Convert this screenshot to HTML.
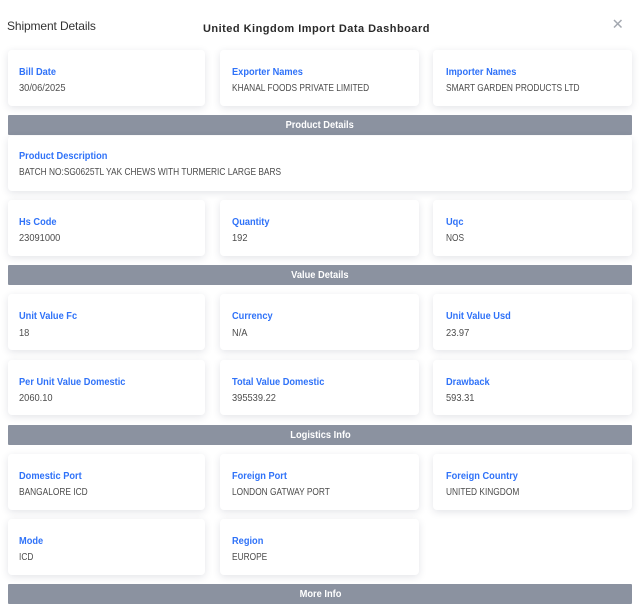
<!DOCTYPE html>
<html><head><meta charset="utf-8"><style>
html,body{margin:0;padding:0;background:#fff}
#p{position:relative;width:640px;height:613px;overflow:hidden;background:#fff;font-family:"Liberation Sans",sans-serif}
.c{position:absolute;background:#fff;border-radius:4px;box-shadow:0 2px 8px rgba(40,50,80,.13)}
.l{position:absolute;left:11px;top:17px;font-size:10px;line-height:12px;font-weight:700;color:#2f72f8;white-space:nowrap;transform:scaleX(.925);transform-origin:0 0}
.v{position:absolute;left:11px;top:32px;font-size:10.5px;line-height:12px;color:#4d4d4d;white-space:nowrap;transform:scaleX(.795);transform-origin:0 0}
.n{transform:scaleX(.885)}
.m{left:12px}.r{left:13px}
.d{top:33px}
.b{position:absolute;left:8px;width:624px;height:20px;background:#8b92a0;color:#fff;font-size:10px;font-weight:700;line-height:20px;text-align:center;border-radius:1px}
.b span{display:inline-block;position:relative;top:1px;transform:scaleX(.93)}
.t{position:absolute;white-space:nowrap}
</style></head><body><div id="p">
<div class="t" style="left:7px;top:19px;font-size:12px;line-height:14px;color:#333;letter-spacing:-.12px">Shipment Details</div>
<div class="t" style="left:203px;top:22px;font-size:11px;line-height:14px;font-weight:700;color:#2a2a2a;letter-spacing:.48px">United Kingdom Import Data Dashboard</div>
<svg style="position:absolute;left:612px;top:18px" width="11" height="11" viewBox="0 0 11 11"><path d="M2 2L9.5 9.5M9.5 2L2 9.5" stroke="#a3a8b0" stroke-width="1.5" fill="none"/></svg>

<div class="c" style="left:8px;top:50px;width:197px;height:56px"><div class="l">Bill Date</div><div class="v n">30/06/2025</div></div>
<div class="c" style="left:220px;top:50px;width:199px;height:56px"><div class="l m">Exporter Names</div><div class="v m">KHANAL FOODS PRIVATE LIMITED</div></div>
<div class="c" style="left:433px;top:50px;width:199px;height:56px"><div class="l r">Importer Names</div><div class="v r">SMART GARDEN PRODUCTS LTD</div></div>

<div class="b" style="top:115px"><span>Product Details</span></div>
<div class="c" style="left:8px;top:136px;width:624px;height:55px"><div class="l" style="top:15px">Product Description</div><div class="v" style="top:30px">BATCH NO:SG0625TL YAK CHEWS WITH TURMERIC LARGE BARS</div></div>

<div class="c" style="left:8px;top:200px;width:197px;height:56px"><div class="l">Hs Code</div><div class="v n">23091000</div></div>
<div class="c" style="left:220px;top:200px;width:199px;height:56px"><div class="l m">Quantity</div><div class="v n m">192</div></div>
<div class="c" style="left:433px;top:200px;width:199px;height:56px"><div class="l r">Uqc</div><div class="v r">NOS</div></div>

<div class="b" style="top:265px"><span>Value Details</span></div>
<div class="c" style="left:8px;top:294px;width:197px;height:56px"><div class="l">Unit Value Fc</div><div class="v n d">18</div></div>
<div class="c" style="left:220px;top:294px;width:199px;height:56px"><div class="l m">Currency</div><div class="v n m d">N/A</div></div>
<div class="c" style="left:433px;top:294px;width:199px;height:56px"><div class="l r">Unit Value Usd</div><div class="v n r d">23.97</div></div>

<div class="c" style="left:8px;top:360px;width:197px;height:55px"><div class="l">Per Unit Value Domestic</div><div class="v n">2060.10</div></div>
<div class="c" style="left:220px;top:360px;width:199px;height:55px"><div class="l m">Total Value Domestic</div><div class="v n m">395539.22</div></div>
<div class="c" style="left:433px;top:360px;width:199px;height:55px"><div class="l r">Drawback</div><div class="v n r">593.31</div></div>

<div class="b" style="top:425px"><span>Logistics Info</span></div>
<div class="c" style="left:8px;top:454px;width:197px;height:56px"><div class="l">Domestic Port</div><div class="v">BANGALORE ICD</div></div>
<div class="c" style="left:220px;top:454px;width:199px;height:56px"><div class="l m">Foreign Port</div><div class="v m">LONDON GATWAY PORT</div></div>
<div class="c" style="left:433px;top:454px;width:199px;height:56px"><div class="l r">Foreign Country</div><div class="v r">UNITED KINGDOM</div></div>

<div class="c" style="left:8px;top:519px;width:197px;height:56px"><div class="l">Mode</div><div class="v">ICD</div></div>
<div class="c" style="left:220px;top:519px;width:199px;height:56px"><div class="l m">Region</div><div class="v m">EUROPE</div></div>

<div class="b" style="top:584px"><span>More Info</span></div>
</div></body></html>
